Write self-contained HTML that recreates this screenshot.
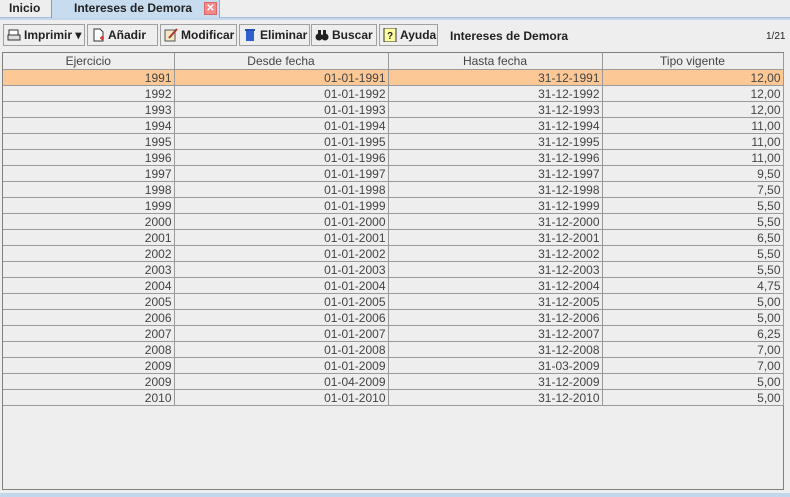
<!DOCTYPE html>
<html><head><style>
*{margin:0;padding:0;box-sizing:border-box}
body{width:790px;height:497px;background:#eeeeee;font-family:"Liberation Sans",sans-serif;position:relative;overflow:hidden;font-size:12px;color:#333}
.abs{position:absolute}
.tab{position:absolute;top:0;height:18px;font-weight:bold;font-size:12px;line-height:17px;color:#222}
.btn{position:absolute;top:24px;height:22px;border:1px solid #a0a0a0;background:#eeeeee;font-weight:bold;font-size:12px;line-height:20px;color:#222;padding-left:20px}
.ico{position:absolute;left:3px;top:3px;width:14px;height:14px}
table{position:absolute;left:3px;top:53px;border-collapse:collapse;font-size:12px;color:#444;table-layout:fixed}
td{height:16px;border-right:1px solid #9a9a9a;border-bottom:1px solid #9a9a9a;text-align:right;padding:2px 2px 0 0;line-height:13px}
th{height:16px;font-weight:normal;border-right:1px solid #9a9a9a;border-bottom:1px solid #9a9a9a;line-height:13px;padding-top:2px;background:#eeeeee}
tr.sel td{background:#fcc896}
</style></head><body>
<div class="abs" style="left:0;top:17px;width:790px;height:3px;background:#c4d6ea;border-top:1px solid #a8bcd4"></div>
<div class="tab" style="left:0;width:52px;border-right:1px solid #999;padding-left:9px">Inicio</div>
<div class="tab" style="left:52px;width:168px;background:#c8dcf0;padding-left:22px;border-right:1px solid #9ab">Intereses de Demora
<span class="abs" style="left:152px;top:2px;width:13px;height:13px;background:#f08a8a;border:1px solid #d66;color:#fff;font-size:10px;line-height:11px;text-align:center">✕</span></div>
<div class="btn" style="left:3px;width:82px"><svg class="ico" viewBox="0 0 14 14"><rect x="2" y="2" width="9" height="5" fill="#fff" stroke="#333"/><rect x="1" y="7" width="12" height="5" fill="#ddd" stroke="#333"/></svg>Imprimir ▾</div>
<div class="btn" style="left:87px;width:71px"><svg class="ico" viewBox="0 0 14 14"><path d="M3 1h6l3 3v9H3z" fill="#fff" stroke="#333"/><path d="M9 10h4M11 8v4" stroke="#e33" stroke-width="1.5"/></svg>Añadir</div>
<div class="btn" style="left:160px;width:77px"><svg class="ico" viewBox="0 0 14 14"><rect x="1" y="2" width="10" height="11" fill="#f4e8c0" stroke="#555"/><path d="M5 10L13 1" stroke="#a33" stroke-width="2"/></svg>Modificar</div>
<div class="btn" style="left:239px;width:71px"><svg class="ico" viewBox="0 0 14 14"><rect x="3" y="3" width="8" height="10" fill="#3060d0"/><rect x="2" y="1" width="10" height="2" fill="#2050b0"/></svg>Eliminar</div>
<div class="btn" style="left:311px;width:66px"><svg class="ico" viewBox="0 0 14 14"><circle cx="4" cy="9" r="3.5" fill="#222"/><circle cx="10" cy="9" r="3.5" fill="#222"/><rect x="3" y="2" width="3" height="5" fill="#222"/><rect x="8" y="2" width="3" height="5" fill="#222"/></svg>Buscar</div>
<div class="btn" style="left:379px;width:59px"><svg class="ico" viewBox="0 0 14 14"><rect x="1" y="0" width="12" height="14" fill="#ffffa0" stroke="#333"/><text x="7" y="11" font-size="10" text-anchor="middle" font-weight="bold" fill="#222">?</text></svg>Ayuda</div>
<div class="abs" style="left:450px;top:29px;font-weight:bold;font-size:12px;color:#222">Intereses de Demora</div>
<div class="abs" style="left:766px;top:31px;font-size:10px;color:#222">1/21</div>
<div class="abs" style="left:2px;top:52px;width:782px;height:438px;border:1px solid #808080;border-top:2px solid #808080"></div>
<div class="abs" style="left:0;top:493px;width:790px;height:4px;background:#c4d6ea"></div>
<table style="width:780px">
<colgroup><col style="width:171px"><col style="width:214px"><col style="width:214px"><col style="width:181px"></colgroup>
<tr><th>Ejercicio</th><th>Desde fecha</th><th>Hasta fecha</th><th>Tipo vigente</th></tr>
<tr class="sel"><td>1991</td><td>01-01-1991</td><td>31-12-1991</td><td>12,00</td></tr>
<tr><td>1992</td><td>01-01-1992</td><td>31-12-1992</td><td>12,00</td></tr>
<tr><td>1993</td><td>01-01-1993</td><td>31-12-1993</td><td>12,00</td></tr>
<tr><td>1994</td><td>01-01-1994</td><td>31-12-1994</td><td>11,00</td></tr>
<tr><td>1995</td><td>01-01-1995</td><td>31-12-1995</td><td>11,00</td></tr>
<tr><td>1996</td><td>01-01-1996</td><td>31-12-1996</td><td>11,00</td></tr>
<tr><td>1997</td><td>01-01-1997</td><td>31-12-1997</td><td>9,50</td></tr>
<tr><td>1998</td><td>01-01-1998</td><td>31-12-1998</td><td>7,50</td></tr>
<tr><td>1999</td><td>01-01-1999</td><td>31-12-1999</td><td>5,50</td></tr>
<tr><td>2000</td><td>01-01-2000</td><td>31-12-2000</td><td>5,50</td></tr>
<tr><td>2001</td><td>01-01-2001</td><td>31-12-2001</td><td>6,50</td></tr>
<tr><td>2002</td><td>01-01-2002</td><td>31-12-2002</td><td>5,50</td></tr>
<tr><td>2003</td><td>01-01-2003</td><td>31-12-2003</td><td>5,50</td></tr>
<tr><td>2004</td><td>01-01-2004</td><td>31-12-2004</td><td>4,75</td></tr>
<tr><td>2005</td><td>01-01-2005</td><td>31-12-2005</td><td>5,00</td></tr>
<tr><td>2006</td><td>01-01-2006</td><td>31-12-2006</td><td>5,00</td></tr>
<tr><td>2007</td><td>01-01-2007</td><td>31-12-2007</td><td>6,25</td></tr>
<tr><td>2008</td><td>01-01-2008</td><td>31-12-2008</td><td>7,00</td></tr>
<tr><td>2009</td><td>01-01-2009</td><td>31-03-2009</td><td>7,00</td></tr>
<tr><td>2009</td><td>01-04-2009</td><td>31-12-2009</td><td>5,00</td></tr>
<tr><td>2010</td><td>01-01-2010</td><td>31-12-2010</td><td>5,00</td></tr>
</table>
</body></html>
